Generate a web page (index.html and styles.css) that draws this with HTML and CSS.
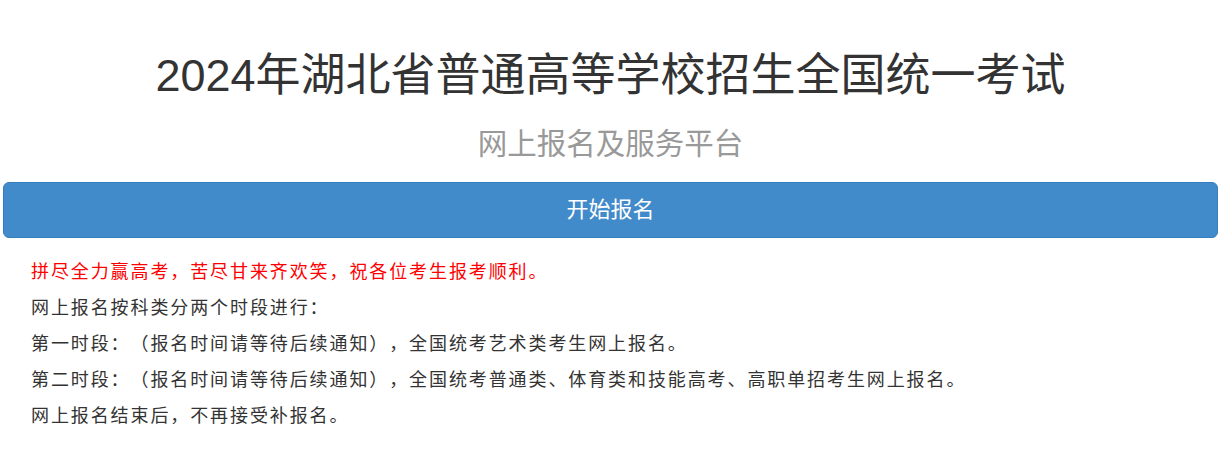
FILE: index.html
```html
<!DOCTYPE html>
<html>
<head>
  <title>网上报名及服务平台</title>
  <meta charset="utf-8"/>
  <link rel="stylesheet" href="styles.css">
</head>
<body>
  <div class="page">
    <h1 class="title">2024年湖北省普通高等学校招生全国统一考试</h1>
    <h2 class="subtitle">网上报名及服务平台</h2>
    <a class="btn-start" href="#">开始报名</a>

    <div class="notice">
      <p class="notice-red">拼尽全力赢高考，苦尽甘来齐欢笑，祝各位考生报考顺利。</p>
      <p>网上报名按科类分两个时段进行：</p>
      <p>第一时段：（报名时间请等待后续通知），全国统考艺术类考生网上报名。</p>
      <p>第二时段：（报名时间请等待后续通知），全国统考普通类、体育类和技能高考、高职单招考生网上报名。</p>
      <p>网上报名结束后，不再接受补报名。</p>
    </div>
  </div>
</body>
</html>
```

FILE: styles.css
```css
body {
	margin: 0;
	background: #fff;
	font-family: "Liberation Sans", "Noto Sans CJK SC", sans-serif;
	color: #333;
	text-spacing-trim: space-all;
}
.page {
	padding: 45px 13px 0 3px;
}
.title {
	margin: 0;
	font-size: 45px;
	font-weight: normal;
	line-height: 62px;
	text-align: center;
	color: #333;
}
.subtitle {
	margin: 17px 0 0 0;
	font-size: 29.5px;
	font-weight: normal;
	line-height: 40px;
	text-align: center;
	color: #999;
}
.btn-start {
	display: block;
	margin-top: 18px;
	height: 56px;
	line-height: 54px;
	box-sizing: border-box;
	text-align: center;
	font-size: 22px;
	color: #fff;
	text-decoration: none;
	background: #428bca;
	border: 1px solid #357ebd;
	border-radius: 6px;
}
.notice {
	margin-top: 16px;
	padding-left: 28px;
}
.notice p {
	margin: 0;
	font-size: 18px;
	line-height: 36px;
	letter-spacing: 1.9px;
	color: #333;
}
.notice .notice-red {
	color: #f00;
}
```
